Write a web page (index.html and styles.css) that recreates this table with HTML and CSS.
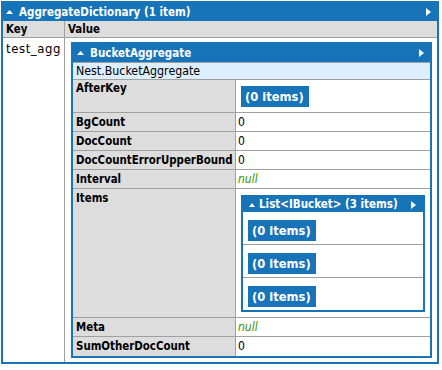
FILE: index.html
```html
<!DOCTYPE html>
<html>
<head>
<meta charset="utf-8">
<link rel="stylesheet" href="styles.css">
</head>
<body>
<table class="tbl outer">
  <tr>
    <td class="head outer-head" colspan="2">
      <div class="hdr">
        <svg class="up" width="7" height="4" viewBox="0 0 7 4"><path d="M0 4L3.5 0L7 4Z" fill="#fff"/></svg>
        <span class="title">AggregateDictionary (1 item)</span>
        <svg class="rt" width="5" height="8" viewBox="0 0 5 8"><path d="M0 0L5 4L0 8Z" fill="#fff"/></svg>
      </div>
    </td>
  </tr>
  <tr class="cols">
    <th class="kcol">Key</th>
    <th class="vcol">Value</th>
  </tr>
  <tr>
    <td class="kcol key">test_agg</td>
    <td class="vcol oval">
      <table class="tbl inner">
        <tr>
          <td class="head inner-head" colspan="2">
            <div class="hdr">
              <svg class="up" width="7" height="4" viewBox="0 0 7 4"><path d="M0 4L3.5 0L7 4Z" fill="#fff"/></svg>
              <span class="title">BucketAggregate</span>
              <svg class="rt" width="5" height="8" viewBox="0 0 5 8"><path d="M0 0L5 4L0 8Z" fill="#fff"/></svg>
            </div>
          </td>
        </tr>
        <tr><td class="summary" colspan="2">Nest.BucketAggregate</td></tr>
        <tr class="r-after"><th>AfterKey</th><td class="v btncell"><span class="empty">(0 items)</span></td></tr>
        <tr class="r"><th>BgCount</th><td class="v">0</td></tr>
        <tr class="r"><th>DocCount</th><td class="v">0</td></tr>
        <tr class="r"><th>DocCountErrorUpperBound</th><td class="v">0</td></tr>
        <tr class="r"><th>Interval</th><td class="v null">null</td></tr>
        <tr class="r-items">
          <th>Items</th>
          <td class="v itemscell">
            <table class="tbl list">
              <tr>
                <td class="head list-head">
                  <div class="hdr">
                    <svg class="up" width="6" height="4" viewBox="0 0 6 4"><path d="M0 4L3 0L6 4Z" fill="#fff"/></svg>
                    <span class="title">List&lt;IBucket&gt; (3 items)</span>
                    <svg class="rt" width="5" height="8" viewBox="0 0 5 8"><path d="M0 0L5 4L0 8Z" fill="#fff"/></svg>
                  </div>
                </td>
              </tr>
              <tr><td class="li"><span class="empty">(0 items)</span></td></tr>
              <tr><td class="li"><span class="empty">(0 items)</span></td></tr>
              <tr><td class="li last"><span class="empty">(0 items)</span></td></tr>
            </table>
          </td>
        </tr>
        <tr class="r"><th>Meta</th><td class="v null">null</td></tr>
        <tr class="r last"><th>SumOtherDocCount</th><td class="v">0</td></tr>
      </table>
    </td>
  </tr>
</table>
</body>
</html>
```
FILE: styles.css
```css
* { box-sizing: border-box; }

body {
  margin: 0;
  padding: 1px 0 0 1px;
  font: 12px "DejaVu Sans Condensed", "DejaVu Sans", sans-serif;
  color: #000;
  background: #fff;
}

.tbl {
  border-collapse: separate;
  border-spacing: 0;
  border: 2px solid #1774b9;
}

:where(.tbl) :where(td, th) {
  padding: 1px 3px;
  vertical-align: top;
  line-height: 16px;
  text-align: left;
}

:where(.tbl) th {
  font-weight: bold;
  font-size: 11.4px;
  background: #dddddd;
}

/* blue type headers */
.head {
  background: #1774b9;
  color: #fff;
  font-weight: bold;
  font-size: 11.5px;
}
.hdr {
  display: flex;
  align-items: center;
}
.hdr .up { margin: 0 6px 0 3px; flex: none; }
.hdr .title { flex: 1; white-space: nowrap; }
.hdr .rt { margin-right: 6px; flex: none; }

/* outer table */
.outer { width: 438px; }
.outer-head { height: 18px; padding: 1px 0; }
.cols th { height: 17px; padding: 0 3px; border-bottom: 1px solid #a0a0a0; }
.kcol { width: 62px; border-right: 1px solid #a0a0a0; }
.key {
  padding: 3px 2px 0 3px;
  font-size: 13px;
  letter-spacing: 0.6px;
  white-space: nowrap;
}
.oval { padding: 4px 4px 4px 6px; }

/* inner object table */
.inner { width: 361px; }
.inner-head { height: 19px; padding: 1px 0 0; border-bottom: 1px solid #a0a0a0; }
.inner-head .up { margin-left: 4px; }
.summary {
  background: #ddeeff;
  height: 17px;
  padding: 0 3px;
  border-bottom: 1px solid #a0a0a0;
  font-size: 12.3px;
}
.inner th {
  width: 163px;
  padding: 1px 0 1px 3px;
  border-right: 1px solid #a0a0a0;
  border-bottom: 1px solid #a0a0a0;
  white-space: nowrap;
}
.inner .v {
  padding: 1px 2px;
  border-bottom: 1px solid #a0a0a0;
}
.inner .last > th,
.inner .last > td { border-bottom: none; }
.r > th, .r > td { height: 19px; }
.r-after > th, .r-after > td { height: 33px; }
.inner .r-after > th { padding-top: 0; }
.inner .btncell { padding: 6px 5px 0; }
.null { color: #3a9200; font-style: italic; }

/* empty collection pill */
.empty {
  display: inline-block;
  vertical-align: top;
  height: 21px;
  padding: 2px 5px 2px 4px;
  line-height: 17px;
  background: #1774b9;
  color: #fff;
  font-weight: bold;
  font-size: 12.8px;
  white-space: nowrap;
}

/* Items list */
.r-items > th, .r-items > td { height: 129px; }
.inner .itemscell { padding: 6px 3px 0 5px; }
.list { width: 184px; }
.list-head { height: 15px; padding: 0; line-height: 15px; }
.list-head .up { margin: 0 4px 0 6px; }
.list-head .rt { margin-right: 7px; }
.list .li {
  height: 33px;
  padding: 8px 4px 0 5px;
  border-bottom: 1px solid #a0a0a0;
}
.list .li.last { height: 32px; border-bottom: none; }
```
